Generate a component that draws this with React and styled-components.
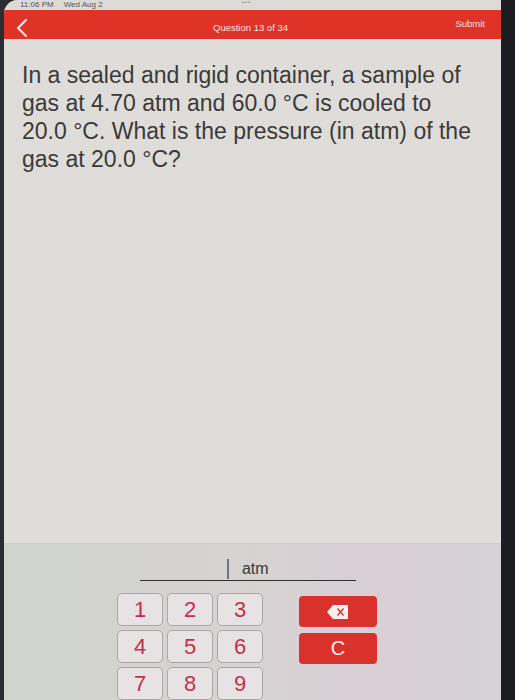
import styled, { createGlobalStyle } from 'styled-components'

const GlobalStyle = createGlobalStyle`
  html, body {
    margin: 0;
    padding: 0;
    background: #1b1d22;
  }
  body {
    font-family: 'Liberation Sans', Arial, sans-serif;
  }
`

const keys = ['1', '2', '3', '4', '5', '6', '7', '8', '9']

export default function App() {
  return (
    <>
      <GlobalStyle />
      <Device>
        <Screen>
          <StatusBar>
            <Clock>11:06 PM</Clock>
            <Clock>Wed Aug 2</Clock>
            <Dots>•••</Dots>
          </StatusBar>
          <Header>
            <BackButton>
              <svg width="12" height="20" viewBox="0 0 12 20">
                <path d="M10 2 L2 10 L10 18" fill="none" stroke="#fbe3e0" strokeWidth="2.2" strokeLinecap="round" strokeLinejoin="round" />
              </svg>
            </BackButton>
            <Title>Question 13 of 34</Title>
            <Submit>Submit</Submit>
          </Header>
          <QuestionArea>
            <QuestionText>
              In a sealed and rigid container, a sample of gas at 4.70&nbsp;atm and 60.0&nbsp;°C is cooled to 20.0&nbsp;°C.
              What is the pressure (in atm) of the gas at 20.0&nbsp;°C?
            </QuestionText>
          </QuestionArea>
          <AnswerPanel>
            <InputLine>
              <Cursor />
              <Unit>atm</Unit>
            </InputLine>
            <PadRow>
              <Keypad>
                {keys.map((k) => (
                  <Key key={k}>{k}</Key>
                ))}
              </Keypad>
              <Actions>
                <ActionButton>
                  <svg width="22" height="14" viewBox="0 0 22 14">
                    <path d="M6 0 H21 V14 H6 L0 7 Z" fill="#fbeeee" />
                    <path d="M10.5 3.5 L16.5 10.5 M16.5 3.5 L10.5 10.5" stroke="#d9322c" strokeWidth="1.4" />
                  </svg>
                </ActionButton>
                <ActionButton>C</ActionButton>
              </Actions>
            </PadRow>
          </AnswerPanel>
        </Screen>
        <Bezel />
      </Device>
    </>
  )
}

const Device = styled.div`
  display: flex;
  width: 515px;
  height: 700px;
  overflow: hidden;
  background: #2a2c30;
  padding-left: 4px;
  box-sizing: border-box;
`

const Screen = styled.div`
  flex: 1;
  display: flex;
  flex-direction: column;
  background: #dfddd9;
  border-top-left-radius: 14px;
  overflow: hidden;
`

const Bezel = styled.div`
  width: 14px;
  background: #1b1d22;
`

const StatusBar = styled.div`
  height: 10px;
  display: flex;
  align-items: center;
  gap: 10px;
  padding-left: 16px;
  background: #dcdbd8;
  position: relative;
`

const Clock = styled.span`
  font-size: 8px;
  color: #555;
  line-height: 10px;
`

const Dots = styled.span`
  position: absolute;
  left: 238px;
  top: -1px;
  font-size: 6px;
  color: #888;
  letter-spacing: 1px;
`

const Header = styled.div`
  height: 29px;
  display: grid;
  grid-template-columns: 1fr auto 1fr;
  align-items: center;
  background: #df3328;
  padding: 0 16px 0 12px;
`

const BackButton = styled.div`
  display: flex;
  align-items: center;
  padding-top: 6px;
`

const Title = styled.div`
  color: #fbe3e0;
  font-size: 9.5px;
  padding-top: 5px;
`

const Submit = styled.div`
  justify-self: end;
  color: #fbe3e0;
  font-size: 9.5px;
  padding-bottom: 3px;
`

const QuestionArea = styled.div`
  flex: 1;
  padding: 22px 0 0 18px;
`

const QuestionText = styled.p`
  margin: 0;
  width: 466px;
  font-size: 23px;
  line-height: 28px;
  color: #3b3a39;
`

const AnswerPanel = styled.div`
  height: 157px;
  background: linear-gradient(90deg, #d0d4ce 0%, #d6d3d2 45%, #d9cfd5 75%, #d6d2d8 100%);
  border-top: 1px solid #cfcdc9;
  display: flex;
  flex-direction: column;
  align-items: center;
  padding-top: 14px;
  box-sizing: border-box;
`

const InputLine = styled.div`
  width: 216px;
  height: 26px;
  border-bottom: 1.5px solid #2f2f2f;
  display: flex;
  align-items: center;
  justify-content: center;
  gap: 13px;
  margin-right: 9px;
`

const Cursor = styled.div`
  width: 1.5px;
  height: 20px;
  background: #6d7686;
`

const Unit = styled.span`
  font-size: 16px;
  color: #3a3a3a;
`

const PadRow = styled.div`
  display: flex;
  gap: 36px;
  margin-top: 12px;
  margin-right: 11px;
`

const Keypad = styled.div`
  display: grid;
  grid-template-columns: repeat(3, 46px);
  grid-auto-rows: 33px;
  gap: 4px;
`

const Key = styled.div`
  display: flex;
  align-items: center;
  justify-content: center;
  background: #e7e3e4;
  border: 1px solid #a9a8a6;
  border-radius: 5px;
  color: #c2304b;
  font-size: 22px;
`

const Actions = styled.div`
  display: flex;
  flex-direction: column;
  gap: 6px;
  padding-top: 3px;
`

const ActionButton = styled.div`
  width: 78px;
  height: 31px;
  display: flex;
  align-items: center;
  justify-content: center;
  background: #d9322c;
  border-radius: 4px;
  color: #fbeeee;
  font-size: 20px;
`
